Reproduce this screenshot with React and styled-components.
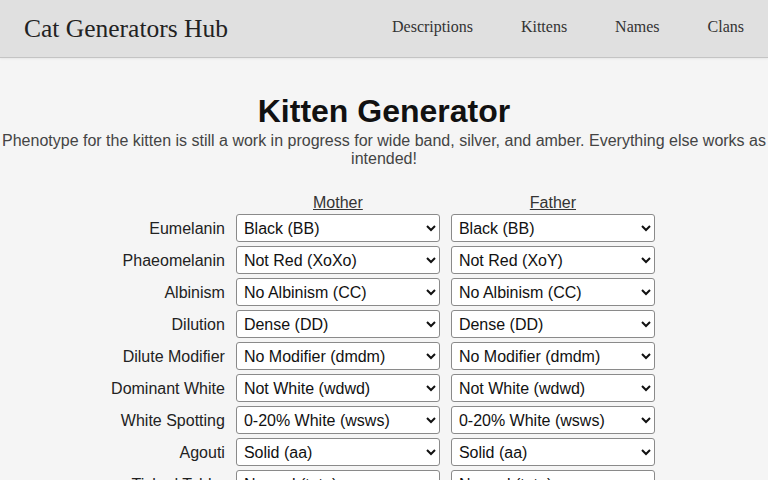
import React from 'react';
import styled, { createGlobalStyle } from 'styled-components';

const GlobalStyle = createGlobalStyle`
  html, body {
    margin: 0;
    padding: 0;
    background: #f5f5f5;
    font-family: "Liberation Sans", Arial, sans-serif;
  }
`;

const Header = styled.header`
  height: 57px;
  background: #e0e0e0;
  border-bottom: 1px solid #c4c4c4;
  box-shadow: 0 1px 2px rgba(0, 0, 0, 0.06);
  display: flex;
  align-items: center;
  justify-content: space-between;
  padding: 0 24px;
  font-family: "Liberation Serif", "Times New Roman", serif;
`;

const Brand = styled.div`
  font-size: 25.5px;
  color: #222;
`;

const Nav = styled.nav`
  display: flex;
  gap: 48px;
  margin-top: -3px;
`;

const NavLink = styled.a`
  font-size: 16px;
  color: #333;
  text-decoration: none;
  cursor: pointer;
`;

const Main = styled.main`
  text-align: center;
  padding-top: 35px;
`;

const Title = styled.h1`
  margin: 0;
  font-size: 32px;
  font-weight: bold;
  color: #111;
  line-height: 37px;
`;

const Intro = styled.p`
  margin: 2px 0 0;
  font-size: 16px;
  line-height: 18px;
  color: #444;
  padding: 0 2px;
`;

const Grid = styled.div`
  display: grid;
  grid-template-columns: auto 204px 204px;
  column-gap: 11px;
  row-gap: 4px;
  justify-content: center;
  align-items: center;
  margin-top: 26px;
  padding-right: 2px;
`;

const ColHead = styled.div`
  font-size: 16px;
  color: #333;
  text-decoration: underline;
  text-align: center;
  line-height: 18px;
  margin-bottom: -2px;
`;

const Label = styled.label`
  font-size: 16px;
  color: #222;
  text-align: right;
  white-space: nowrap;
  padding-top: 1px;
`;

const Select = styled.select`
  width: 204px;
  height: 28px;
  font-family: "Liberation Sans", Arial, sans-serif;
  font-size: 16px;
  color: #111;
  background: #fff;
  border: 1px solid #8a8a8a;
  border-radius: 3px;
  padding: 0 3px;
  margin: 0;
  box-sizing: border-box;
`;

const rows = [
  ['Eumelanin', 'Black (BB)', 'Black (BB)'],
  ['Phaeomelanin', 'Not Red (XoXo)', 'Not Red (XoY)'],
  ['Albinism', 'No Albinism (CC)', 'No Albinism (CC)'],
  ['Dilution', 'Dense (DD)', 'Dense (DD)'],
  ['Dilute Modifier', 'No Modifier (dmdm)', 'No Modifier (dmdm)'],
  ['Dominant White', 'Not White (wdwd)', 'Not White (wdwd)'],
  ['White Spotting', '0-20% White (wsws)', '0-20% White (wsws)'],
  ['Agouti', 'Solid (aa)', 'Solid (aa)'],
  ['Ticked Tabby', 'Normal (tata)', 'Normal (tata)'],
  ['Mackerel', 'Mackerel (McMc)', 'Mackerel (McMc)'],
];

const GeneSelect = ({ value }) => (
  <Select defaultValue={value}>
    <option>{value}</option>
  </Select>
);

export default function App() {
  return (
    <>
      <GlobalStyle />
      <Header>
        <Brand>Cat Generators Hub</Brand>
        <Nav>
          <NavLink>Descriptions</NavLink>
          <NavLink>Kittens</NavLink>
          <NavLink>Names</NavLink>
          <NavLink>Clans</NavLink>
        </Nav>
      </Header>
      <Main>
        <Title>Kitten Generator</Title>
        <Intro>
          Phenotype for the kitten is still a work in progress for wide band, silver, and amber. Everything else works as intended!
        </Intro>
        <Grid>
          <div />
          <ColHead>Mother</ColHead>
          <ColHead>Father</ColHead>
          {rows.map(([label, mom, dad]) => (
            <React.Fragment key={label}>
              <Label>{label}</Label>
              <GeneSelect value={mom} />
              <GeneSelect value={dad} />
            </React.Fragment>
          ))}
        </Grid>
      </Main>
    </>
  );
}
